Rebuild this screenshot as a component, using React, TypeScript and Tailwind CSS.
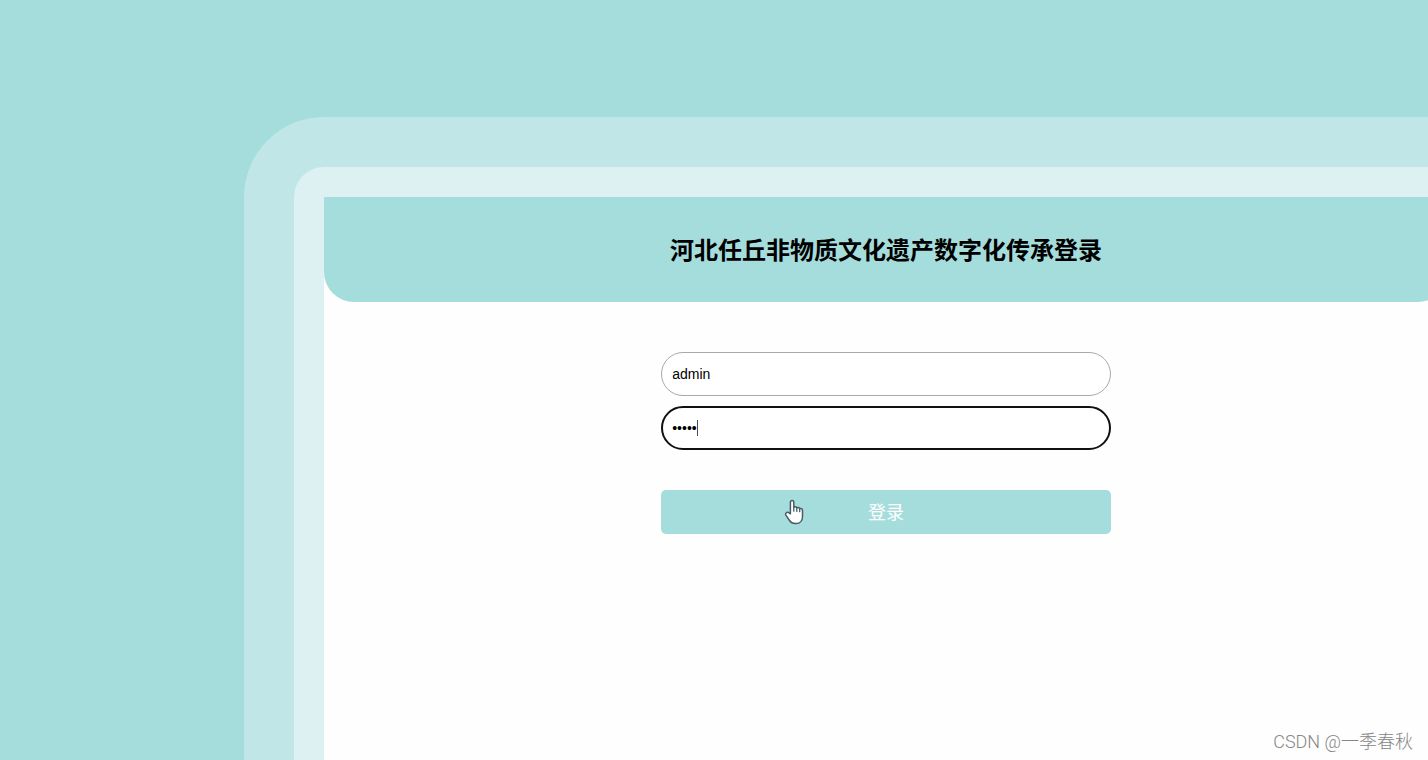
import { useState } from "react";

function HandCursor() {
  return (
    <svg
      aria-hidden="true"
      viewBox="0 0 20 26"
      className="pointer-events-none absolute left-[123px] top-[9px] h-[26px] w-5"
    >
      <path
        d="M6.4 14.8V3.4C6.4 2.2 7.1 1.5 8.1 1.5S9.8 2.2 9.8 3.4V8.3C10.4 7.4 12.4 7.5 12.8 8.9C13.5 8.1 15.3 8.4 15.7 9.7C16.7 9 18.5 9.6 18.5 11.4V17.4C18.5 21.6 16 24.5 12.2 24.5H11C8.4 24.5 6.8 23.4 5.5 21.5L1.9 16.2C1 14.5 2.6 12.6 4.3 13.4Z"
        fill="#fff"
        stroke="#4a5d66"
        strokeWidth="1.5"
        strokeLinejoin="round"
      />
      <path
        d="M9.8 8.3V12.2M12.8 8.9V12.4M15.7 9.7V12.7"
        fill="none"
        stroke="#4a5d66"
        strokeWidth="1.3"
        strokeLinecap="round"
      />
    </svg>
  );
}

function LoginForm() {
  const [username, setUsername] = useState("admin");
  const [password, setPassword] = useState("admin");

  return (
    <form
      onSubmit={(e) => e.preventDefault()}
      className="mx-auto mt-[50px] flex w-2/5 flex-col gap-2.5"
    >
      <input
        type="text"
        name="username"
        aria-label="用户名"
        value={username}
        onChange={(e) => setUsername(e.target.value)}
        className="h-11 w-full rounded-full border border-[#a9a9a9] bg-white px-2.5 text-sm text-black outline-none"
      />
      <div className="relative">
        <input
          type="password"
          name="password"
          aria-label="密码"
          value={password}
          onChange={(e) => setPassword(e.target.value)}
          className="h-11 w-full rounded-full border-2 border-[#101010] bg-white px-[9px] text-sm text-black caret-transparent outline-none"
        />
        <span className="absolute left-9 top-3.5 h-4 w-px bg-[#505050]" />
      </div>
      <div className="relative mt-[30px]">
        <button
          type="submit"
          className="h-11 w-full rounded-[5px] bg-[#a5dddd] pt-0.5 text-lg text-white"
        >
          登录
        </button>
        <HandCursor />
      </div>
    </form>
  );
}

export default function App() {
  return (
    <main className="relative h-screen overflow-hidden bg-[#a5dddd] pl-[244px] pt-[117px] font-['Liberation_Sans','Noto_Sans_CJK_SC',sans-serif]">
      <div className="-mr-[100px] rounded-[80px] bg-[#c0e6e7] p-[50px]">
        <div className="rounded-[30px] bg-[#ddf0f2] p-[30px]">
          <section className="min-h-screen bg-[#fefefe]">
            <header className="flex h-[105px] items-center justify-center rounded-b-[30px] bg-[#a5dddd] pt-0.5">
              <h1 className="text-2xl font-bold text-black">河北任丘非物质文化遗产数字化传承登录</h1>
            </header>
            <LoginForm />
          </section>
        </div>
      </div>
      <p className="absolute bottom-1.5 right-[15px] font-['Roboto','Noto_Sans_CJK_SC',sans-serif] text-lg font-light leading-6 text-[#868686]">
        CSDN @一季春秋
      </p>
    </main>
  );
}
